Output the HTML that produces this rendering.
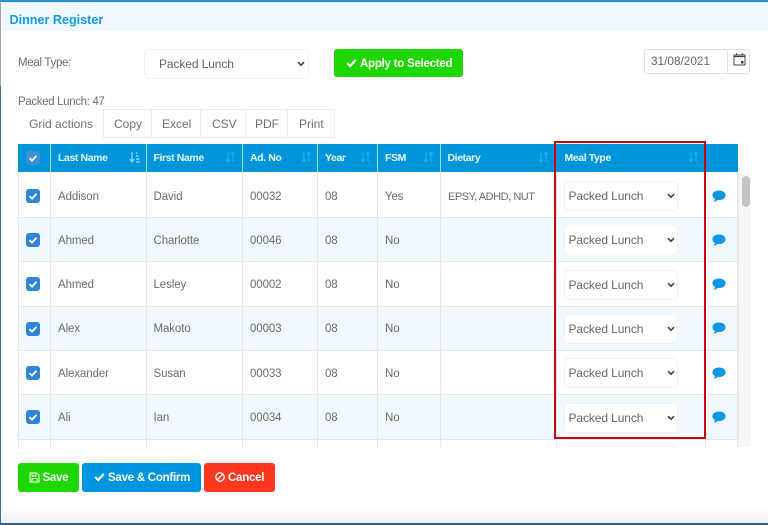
<!DOCTYPE html>
<html><head><meta charset="utf-8"><title>Dinner Register</title>
<style>
html,body{margin:0;padding:0;background:#fff}
body{width:768px;height:525px;position:relative;overflow:hidden;font-family:"Liberation Sans",sans-serif;color:#666;font-size:12px;filter:blur(.3px)}
.a{position:absolute;white-space:nowrap}
.box{position:absolute;box-sizing:border-box}
.hl{background:#0095db;top:144px;height:28px}
.th{position:absolute;top:151px;color:#eaf6fd;font-weight:bold;font-size:10.5px;letter-spacing:-.4px;line-height:14px;white-space:nowrap}
.vl{position:absolute;width:1px;top:172px;height:275px;background:#e3e8ec}
.hv{position:absolute;width:1px;top:144px;height:28px;background:#a8d4ee}
.row{position:absolute;left:18px;width:720px;box-sizing:border-box;border-bottom:1px solid #e1e7ec}
.td{position:absolute;font-size:11.5px;letter-spacing:-.1px;line-height:14px;color:#6b6b6b;white-space:nowrap}
.sel{position:absolute;left:564px;width:114px;height:30px;background:#fff;border:1px solid #f0f2f4;border-radius:4px;box-sizing:border-box;font-size:12px;letter-spacing:-.1px;line-height:29px;padding-left:3.5px;color:#666}
.btn{position:absolute;box-sizing:border-box;border-radius:3px;color:#fff;font-weight:bold;text-align:left;white-space:nowrap;font-size:11.5px;letter-spacing:-.25px}
.ga{position:absolute;top:117px;font-size:12px;line-height:14px;color:#6f6f6f}
svg{position:absolute;overflow:visible}
</style></head>
<body>
<!-- frame -->
<div class="box" style="left:0;top:0;width:768px;height:2px;background:#2b8fc9"></div>
<div class="box" style="left:0;top:2px;width:768px;height:1px;background:#d8eaf5"></div>
<div class="box" style="left:0;top:3px;width:768px;height:28px;background:#f0f9ff"></div>
<div class="box" style="left:0;top:505px;width:768px;height:18px;background:linear-gradient(#fff,#f0f0f0)"></div>
<div class="box" style="left:0;top:86px;width:1px;height:439px;background:#3f6f96"></div>
<div class="box" style="left:0;top:3px;width:1px;height:83px;background:#a5a5a5"></div>
<div class="box" style="left:0;top:523px;width:768px;height:2px;background:#2f6283"></div>
<div class="a" style="left:9.5px;top:12px;font-size:12.6px;line-height:17px;font-weight:bold;color:#0f9be3">Dinner Register</div>

<!-- top controls -->
<div class="a" style="left:18px;top:56px;font-size:11.5px;letter-spacing:-.3px;line-height:14px;color:#6f6f6f">Meal Type:</div>
<div class="box" style="left:144px;top:49px;width:165px;height:30px;border:1px solid #f0f2f4;border-radius:4px;background:#fff"></div>
<div class="a" style="left:159px;top:57px;font-size:12px;letter-spacing:-.1px;line-height:15px;color:#666">Packed Lunch</div>
<svg style="left:297px;top:61px" width="8" height="6" viewBox="0 0 10 7"><path d="M1.2 1.2 5 5 8.8 1.2" fill="none" stroke="#444" stroke-width="2"/></svg>

<div class="btn" style="left:334px;top:49px;width:129px;height:28px;background:#1ed700;line-height:30px;padding-left:26px">Apply to Selected</div>
<svg style="left:346px;top:58px" width="11" height="10" viewBox="0 0 11 10"><path d="M1.2 5 4.2 8 9.8 1.8" fill="none" stroke="#fff" stroke-width="2.2"/></svg>

<div class="box" style="left:644px;top:49px;width:106px;height:25px;border:1px solid #dfe3e6;border-radius:3px;background:#fff"></div>
<div class="box" style="left:727px;top:49px;width:1px;height:25px;background:#dfe3e6"></div>
<div class="a" style="left:651px;top:54px;font-size:11.8px;line-height:15px;color:#666">31/08/2021</div>
<svg style="left:733px;top:53px" width="13" height="13" viewBox="0 0 13 13"><path d="M1 2H12V12H1Z" fill="none" stroke="#444" stroke-width="1"/><path d="M1 3.5H12" stroke="#444" stroke-width="1.2"/><path d="M3.5 .3V2.5M9.5 .3V2.5" stroke="#444" stroke-width="1.2"/><rect x="8" y="8" width="2.5" height="2.5" fill="#444"/></svg>

<div class="a" style="left:18px;top:95px;font-size:11.5px;letter-spacing:-.35px;line-height:14px;color:#6f6f6f">Packed Lunch: 47</div>

<!-- grid actions -->
<div class="box" style="left:103px;top:109px;width:232px;height:29px;border:1px solid #e9ecef;background:#fff"></div>
<div class="box" style="left:151px;top:109px;width:1px;height:29px;background:#e9ecef"></div>
<div class="box" style="left:200px;top:109px;width:1px;height:29px;background:#e9ecef"></div>
<div class="box" style="left:245px;top:109px;width:1px;height:29px;background:#e9ecef"></div>
<div class="box" style="left:287px;top:109px;width:1px;height:29px;background:#e9ecef"></div>
<div class="ga" style="left:29px">Grid actions</div>
<div class="ga" style="left:114px">Copy</div>
<div class="ga" style="left:162px">Excel</div>
<div class="ga" style="left:212px">CSV</div>
<div class="ga" style="left:255px">PDF</div>
<div class="ga" style="left:299px">Print</div>

<!-- rows -->
<div class="row" style="top:172px;height:46px;background:#fff"></div>
<div class="row" style="top:218px;height:44px;background:#f1f9ff"></div>
<div class="row" style="top:262px;height:45px;background:#fff"></div>
<div class="row" style="top:307px;height:44px;background:#f1f9ff"></div>
<div class="row" style="top:351px;height:44px;background:#fff"></div>
<div class="row" style="top:395px;height:45px;background:#f1f9ff"></div>

<!-- vertical lines -->
<div class="vl" style="left:18px"></div><div class="vl" style="left:50px"></div><div class="vl" style="left:146px"></div><div class="vl" style="left:242px"></div><div class="vl" style="left:317px"></div><div class="vl" style="left:377px"></div><div class="vl" style="left:440px"></div><div class="vl" style="left:556px"></div><div class="vl" style="left:705px"></div><div class="vl" style="left:737px"></div>

<!-- header -->
<div class="box hl" style="left:18px;width:720px"></div>
<div class="hv" style="left:50px"></div><div class="hv" style="left:146px"></div><div class="hv" style="left:242px"></div><div class="hv" style="left:317px"></div><div class="hv" style="left:377px"></div><div class="hv" style="left:440px"></div>
<div class="th" style="left:58px">Last Name</div>
<div class="th" style="left:153.5px">First Name</div>
<div class="th" style="left:250px">Ad. No</div>
<div class="th" style="left:325px">Year</div>
<div class="th" style="left:385px">FSM</div>
<div class="th" style="left:447.5px">Dietary</div>
<div class="th" style="left:564.5px">Meal Type</div>

<!-- sort icons -->
<svg style="left:129px;top:152px" width="11" height="11" viewBox="0 0 11 11"><path d="M3 0V9M1 7 3 10 5 7" fill="none" stroke="#9fd6f3" stroke-width="1.2"/><path d="M7 1H8.5M7 4H9.5M7 7H10.5M7 10H11" stroke="#9fd6f3" stroke-width="1.2"/></svg>
<svg style="left:225px;top:152px" width="11" height="11" viewBox="0 0 11 11"><path d="M3 0V10M1 7.5 3 10 5 7.5M8 10V0M6 2.5 8 0 10 2.5" fill="none" stroke="#27aee8" stroke-width="1.3"/></svg>
<svg style="left:301px;top:152px" width="11" height="11" viewBox="0 0 11 11"><path d="M3 0V10M1 7.5 3 10 5 7.5M8 10V0M6 2.5 8 0 10 2.5" fill="none" stroke="#27aee8" stroke-width="1.3"/></svg>
<svg style="left:360px;top:152px" width="11" height="11" viewBox="0 0 11 11"><path d="M3 0V10M1 7.5 3 10 5 7.5M8 10V0M6 2.5 8 0 10 2.5" fill="none" stroke="#27aee8" stroke-width="1.3"/></svg>
<svg style="left:423px;top:152px" width="11" height="11" viewBox="0 0 11 11"><path d="M3 0V10M1 7.5 3 10 5 7.5M8 10V0M6 2.5 8 0 10 2.5" fill="none" stroke="#27aee8" stroke-width="1.3"/></svg>
<svg style="left:538px;top:152px" width="11" height="11" viewBox="0 0 11 11"><path d="M3 0V10M1 7.5 3 10 5 7.5M8 10V0M6 2.5 8 0 10 2.5" fill="none" stroke="#27aee8" stroke-width="1.3"/></svg>
<svg style="left:688px;top:152px" width="11" height="11" viewBox="0 0 11 11"><path d="M3 0V10M1 7.5 3 10 5 7.5M8 10V0M6 2.5 8 0 10 2.5" fill="none" stroke="#27aee8" stroke-width="1.3"/></svg>

<!-- header checkbox -->
<svg style="left:26px;top:151px" width="14" height="14" viewBox="0 0 14 14"><rect width="14" height="14" rx="3" fill="#3f8fd8"/><path d="M3.5 7.2 6 9.6 10.5 4.8" fill="none" stroke="#fff" stroke-width="1.8"/></svg>

<!-- row 1 -->
<svg style="left:25.5px;top:189px" width="14" height="14" viewBox="0 0 14 14"><rect width="14" height="14" rx="3" fill="#2f86d8"/><path d="M3.5 7.2 6 9.6 10.5 4.8" fill="none" stroke="#fff" stroke-width="1.8"/></svg>
<div class="td" style="left:58px;top:189.5px">Addison</div><div class="td" style="left:153.5px;top:189.5px">David</div><div class="td" style="left:250px;top:189.5px">00032</div><div class="td" style="left:325px;top:189.5px">08</div><div class="td" style="left:385px;top:189.5px">Yes</div><div class="td" style="left:448px;top:189.5px;font-size:11px;letter-spacing:-.45px">EPSY, ADHD, NUT</div>
<div class="sel" style="top:181px">Packed Lunch</div>
<svg style="left:667px;top:193px" width="8" height="6" viewBox="0 0 10 7"><path d="M1.2 1.2 5 5 8.8 1.2" fill="none" stroke="#444" stroke-width="2"/></svg>
<svg style="left:712px;top:190px" width="14" height="13" viewBox="0 0 14 13"><path d="M7 0.5C3.2 0.5 .4 2.6 .4 5.2 .4 6.8 1.4 8.1 3 9 2.8 10 2.2 11 1.6 11.8 3.2 11.6 4.8 10.8 5.9 9.9L7 10C10.8 10 13.6 7.8 13.6 5.2 13.6 2.6 10.8 .5 7 .5Z" fill="#0d97e6"/></svg>

<!-- row 2 -->
<svg style="left:25.5px;top:233px" width="14" height="14" viewBox="0 0 14 14"><rect width="14" height="14" rx="3" fill="#2f86d8"/><path d="M3.5 7.2 6 9.6 10.5 4.8" fill="none" stroke="#fff" stroke-width="1.8"/></svg>
<div class="td" style="left:58px;top:233.5px">Ahmed</div><div class="td" style="left:153.5px;top:233.5px">Charlotte</div><div class="td" style="left:250px;top:233.5px">00046</div><div class="td" style="left:325px;top:233.5px">08</div><div class="td" style="left:385px;top:233.5px">No</div>
<div class="sel" style="top:225px">Packed Lunch</div>
<svg style="left:667px;top:237px" width="8" height="6" viewBox="0 0 10 7"><path d="M1.2 1.2 5 5 8.8 1.2" fill="none" stroke="#444" stroke-width="2"/></svg>
<svg style="left:712px;top:234px" width="14" height="13" viewBox="0 0 14 13"><path d="M7 0.5C3.2 0.5 .4 2.6 .4 5.2 .4 6.8 1.4 8.1 3 9 2.8 10 2.2 11 1.6 11.8 3.2 11.6 4.8 10.8 5.9 9.9L7 10C10.8 10 13.6 7.8 13.6 5.2 13.6 2.6 10.8 .5 7 .5Z" fill="#0d97e6"/></svg>

<!-- row 3 -->
<svg style="left:25.5px;top:277px" width="14" height="14" viewBox="0 0 14 14"><rect width="14" height="14" rx="3" fill="#2f86d8"/><path d="M3.5 7.2 6 9.6 10.5 4.8" fill="none" stroke="#fff" stroke-width="1.8"/></svg>
<div class="td" style="left:58px;top:278px">Ahmed</div><div class="td" style="left:153.5px;top:278px">Lesley</div><div class="td" style="left:250px;top:278px">00002</div><div class="td" style="left:325px;top:278px">08</div><div class="td" style="left:385px;top:278px">No</div>
<div class="sel" style="top:270px">Packed Lunch</div>
<svg style="left:667px;top:282px" width="8" height="6" viewBox="0 0 10 7"><path d="M1.2 1.2 5 5 8.8 1.2" fill="none" stroke="#444" stroke-width="2"/></svg>
<svg style="left:712px;top:278px" width="14" height="13" viewBox="0 0 14 13"><path d="M7 0.5C3.2 0.5 .4 2.6 .4 5.2 .4 6.8 1.4 8.1 3 9 2.8 10 2.2 11 1.6 11.8 3.2 11.6 4.8 10.8 5.9 9.9L7 10C10.8 10 13.6 7.8 13.6 5.2 13.6 2.6 10.8 .5 7 .5Z" fill="#0d97e6"/></svg>

<!-- row 4 -->
<svg style="left:25.5px;top:322px" width="14" height="14" viewBox="0 0 14 14"><rect width="14" height="14" rx="3" fill="#2f86d8"/><path d="M3.5 7.2 6 9.6 10.5 4.8" fill="none" stroke="#fff" stroke-width="1.8"/></svg>
<div class="td" style="left:58px;top:322px">Alex</div><div class="td" style="left:153.5px;top:322px">Makoto</div><div class="td" style="left:250px;top:322px">00003</div><div class="td" style="left:325px;top:322px">08</div><div class="td" style="left:385px;top:322px">No</div>
<div class="sel" style="top:314px">Packed Lunch</div>
<svg style="left:667px;top:326px" width="8" height="6" viewBox="0 0 10 7"><path d="M1.2 1.2 5 5 8.8 1.2" fill="none" stroke="#444" stroke-width="2"/></svg>
<svg style="left:712px;top:322px" width="14" height="13" viewBox="0 0 14 13"><path d="M7 0.5C3.2 0.5 .4 2.6 .4 5.2 .4 6.8 1.4 8.1 3 9 2.8 10 2.2 11 1.6 11.8 3.2 11.6 4.8 10.8 5.9 9.9L7 10C10.8 10 13.6 7.8 13.6 5.2 13.6 2.6 10.8 .5 7 .5Z" fill="#0d97e6"/></svg>

<!-- row 5 -->
<svg style="left:25.5px;top:366px" width="14" height="14" viewBox="0 0 14 14"><rect width="14" height="14" rx="3" fill="#2f86d8"/><path d="M3.5 7.2 6 9.6 10.5 4.8" fill="none" stroke="#fff" stroke-width="1.8"/></svg>
<div class="td" style="left:58px;top:366.5px">Alexander</div><div class="td" style="left:153.5px;top:366.5px">Susan</div><div class="td" style="left:250px;top:366.5px">00033</div><div class="td" style="left:325px;top:366.5px">08</div><div class="td" style="left:385px;top:366.5px">No</div>
<div class="sel" style="top:358px">Packed Lunch</div>
<svg style="left:667px;top:370px" width="8" height="6" viewBox="0 0 10 7"><path d="M1.2 1.2 5 5 8.8 1.2" fill="none" stroke="#444" stroke-width="2"/></svg>
<svg style="left:712px;top:367px" width="14" height="13" viewBox="0 0 14 13"><path d="M7 0.5C3.2 0.5 .4 2.6 .4 5.2 .4 6.8 1.4 8.1 3 9 2.8 10 2.2 11 1.6 11.8 3.2 11.6 4.8 10.8 5.9 9.9L7 10C10.8 10 13.6 7.8 13.6 5.2 13.6 2.6 10.8 .5 7 .5Z" fill="#0d97e6"/></svg>

<!-- row 6 -->
<svg style="left:25.5px;top:410px" width="14" height="14" viewBox="0 0 14 14"><rect width="14" height="14" rx="3" fill="#2f86d8"/><path d="M3.5 7.2 6 9.6 10.5 4.8" fill="none" stroke="#fff" stroke-width="1.8"/></svg>
<div class="td" style="left:58px;top:411px">Ali</div><div class="td" style="left:153.5px;top:411px">Ian</div><div class="td" style="left:250px;top:411px">00034</div><div class="td" style="left:325px;top:411px">08</div><div class="td" style="left:385px;top:411px">No</div>
<div class="sel" style="top:403px">Packed Lunch</div>
<svg style="left:667px;top:415px" width="8" height="6" viewBox="0 0 10 7"><path d="M1.2 1.2 5 5 8.8 1.2" fill="none" stroke="#444" stroke-width="2"/></svg>
<svg style="left:712px;top:411px" width="14" height="13" viewBox="0 0 14 13"><path d="M7 0.5C3.2 0.5 .4 2.6 .4 5.2 .4 6.8 1.4 8.1 3 9 2.8 10 2.2 11 1.6 11.8 3.2 11.6 4.8 10.8 5.9 9.9L7 10C10.8 10 13.6 7.8 13.6 5.2 13.6 2.6 10.8 .5 7 .5Z" fill="#0d97e6"/></svg>

<!-- clipped next select -->
<div class="box" style="left:566px;top:446px;width:110px;height:1px;background:#eef1f3"></div>

<!-- scrollbar -->
<div class="box" style="left:738px;top:173px;width:13px;height:274px;background:#f7f7f7;border-left:1px solid #ececec"></div>
<div class="box" style="left:742px;top:176px;width:7.5px;height:31px;background:#c3c3c3;border-radius:4px"></div>

<!-- red highlight -->
<div class="box" style="left:554px;top:141px;width:152px;height:298px;border:2px solid #c8060f"></div>

<!-- bottom buttons -->
<div class="btn" style="left:18px;top:463px;width:61px;height:29px;background:#1ed700;line-height:31px;padding-left:24.5px">Save</div>
<svg style="left:29px;top:472px" width="11" height="11" viewBox="0 0 11 11"><path d="M1 1H8L10 3V10H1ZM3 1V4H7V1M3 10V6.5H8V10" fill="none" stroke="#fff" stroke-width="1"/></svg>
<div class="btn" style="left:82px;top:463px;width:119px;height:29px;background:#0095e0;line-height:31px;padding-left:26px">Save &amp; Confirm</div>
<svg style="left:94px;top:472px" width="11" height="10" viewBox="0 0 11 10"><path d="M1.2 5 4.2 8 9.8 1.8" fill="none" stroke="#fff" stroke-width="2.2"/></svg>
<div class="btn" style="left:204px;top:463px;width:71px;height:29px;background:#ff3620;line-height:31px;padding-left:24px">Cancel</div>
<svg style="left:215px;top:472px" width="10" height="10" viewBox="0 0 10 10"><circle cx="5" cy="5" r="4.2" fill="none" stroke="#fff" stroke-width="1.3"/><path d="M2.2 7.8 7.8 2.2" stroke="#fff" stroke-width="1.3"/></svg>
</body></html>
